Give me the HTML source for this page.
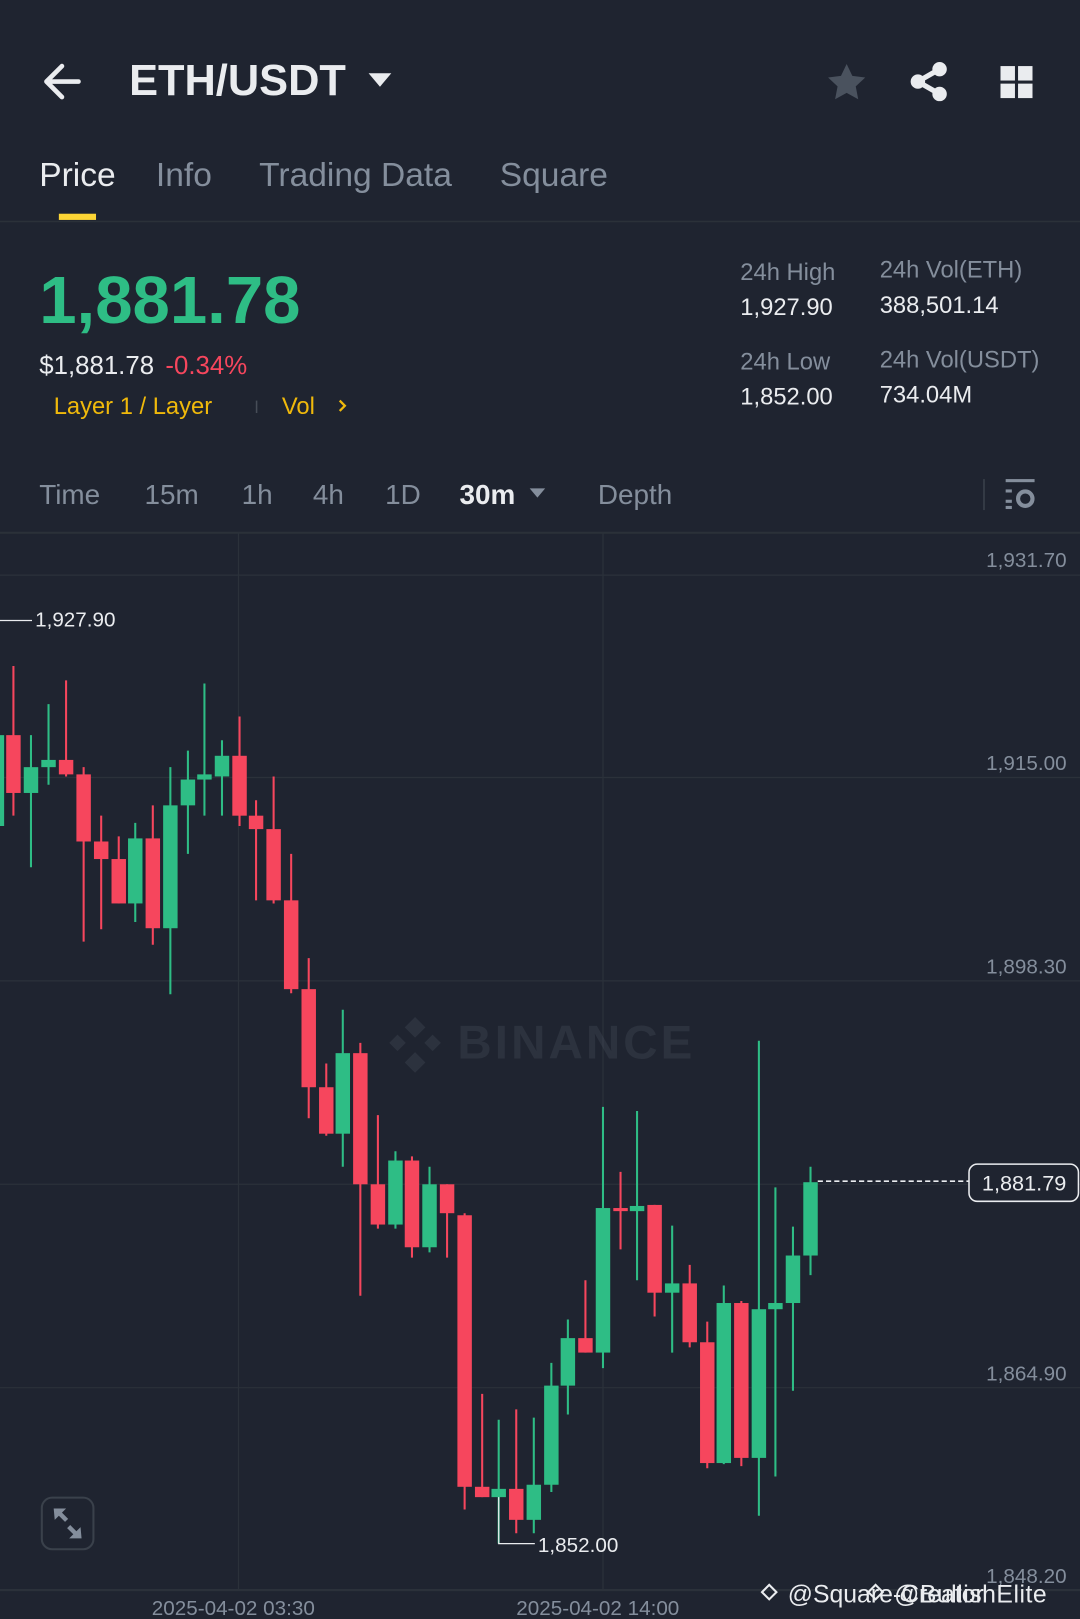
<!DOCTYPE html>
<html><head><meta charset="utf-8"><style>
html,body{margin:0;padding:0;background:#1f2430;overflow:hidden}
#w{width:1046px;height:1568px;transform:scale(1.03250478);transform-origin:0 0;position:relative;background:#1f2430;font-family:"Liberation Sans",sans-serif;color:#eaecef}
.a{position:absolute;white-space:nowrap}
.g{color:#848e9c}
</style></head><body><div id="w">
<svg class="a" style="left:0;top:0" width="1046" height="1568">
<path d="M76 79H46M60 64L45 79L60 94" stroke="#eaecef" stroke-width="4.5" fill="none" stroke-linecap="round" stroke-linejoin="round"/>
<path d="M357 71h22l-11 13z" fill="#eaecef"/>
<path d="M820 62l5.5 11.5 12.5 1.6-9.2 8.6 2.4 12.4-11.2-6.1-11.2 6.1 2.4-12.4-9.2-8.6 12.5-1.6z" fill="#4a525e"/>
<g fill="#eaecef"><circle cx="910" cy="67" r="7"/><circle cx="910" cy="91" r="7"/><circle cx="889" cy="79" r="7"/></g>
<path d="M910 67L889 79L910 91" stroke="#eaecef" stroke-width="5" fill="none"/>
<g fill="#eaecef"><rect x="969" y="64" width="14" height="14"/><rect x="986" y="64" width="14" height="14"/><rect x="969" y="81" width="14" height="14"/><rect x="986" y="81" width="14" height="14"/></g>
<rect x="57" y="207" width="36" height="6" fill="#fcd535"/>
<line x1="0" y1="214.5" x2="1046" y2="214.5" stroke="#2b3139" stroke-width="1.5"/>
<line x1="248.5" y1="388" x2="248.5" y2="400" stroke="#474d57" stroke-width="1.5"/>
<path d="M329 388l5 5-5 5" stroke="#f0b90b" stroke-width="2.2" fill="none"/>
<path d="M513 473h15l-7.5 9z" fill="#848e9c"/>
<line x1="953" y1="464" x2="953" y2="494" stroke="#3a414b" stroke-width="1.5"/>
<g fill="#848e9c"><rect x="974" y="464" width="28" height="3"/><rect x="974" y="474" width="6" height="3"/><rect x="974" y="484" width="6" height="3"/><rect x="974" y="490" width="6" height="3"/></g>
<circle cx="993" cy="483" r="7" stroke="#848e9c" stroke-width="4" fill="none"/>
<line x1="0" y1="516" x2="1046" y2="516" stroke="#2b3139" stroke-width="2"/>
<g stroke="#2b313a" stroke-width="1.2">
<line x1="0" y1="557" x2="1046" y2="557"/><line x1="0" y1="753" x2="1046" y2="753"/><line x1="0" y1="950" x2="1046" y2="950"/><line x1="0" y1="1147" x2="1046" y2="1147"/><line x1="0" y1="1344" x2="1046" y2="1344"/><line x1="0" y1="1540" x2="1046" y2="1540"/>
<line x1="231" y1="516" x2="231" y2="1540"/><line x1="584" y1="516" x2="584" y2="1540"/>
</g>
<line x1="0" y1="1540" x2="1046" y2="1540" stroke="#2b313a" stroke-width="2"/>
<g opacity="0.13" fill="#848e9c"><path d="M402 985l10 10-10 10-10-10zM385 1002l8 8-8 8-8-8zM419 1002l8 8-8 8-8-8zM402 1019l10 10-10 10-10-10z"/>
<text x="443" y="1025" font-family="Liberation Sans" font-weight="bold" font-size="46" letter-spacing="3">BINANCE</text></g>
<g id="c"></g>
<line x1="0" y1="601" x2="31" y2="601" stroke="#eaecef" stroke-width="1.2"/>
<path d="M483 1450V1495H518" stroke="#eaecef" stroke-width="1.2" fill="none"/>
<line x1="792" y1="1144" x2="938" y2="1144" stroke="#eaecef" stroke-width="1.5" stroke-dasharray="5 3"/>
<rect x="938.5" y="1127.5" width="106" height="36" rx="8" fill="#1f2430" stroke="#eaecef" stroke-width="1.5"/>
<rect x="40.5" y="1450.5" width="50" height="50" rx="10" fill="none" stroke="#3a414b" stroke-width="2"/>
<path d="M52 1461h12l-4 4 6 6-3 3-6-6-4 4z M79 1490h-12l4-4-6-6 3-3 6 6 4-4z" fill="#848e9c"/>
<path d="M745 1535l7 7-7 7-7-7z" stroke="#eaecef" stroke-width="2" fill="none"/>
<path d="M848 1535l7 7-7 7-7-7z" stroke="#eaecef" stroke-width="2" fill="none"/>
</svg>
<div class="a" style="left:125px;top:54px;font-size:42px;font-weight:bold">ETH/USDT</div>
<div class="a" style="left:38px;top:151px;font-size:32.5px">Price</div>
<div class="a g" style="left:151px;top:151px;font-size:32.5px">Info</div>
<div class="a g" style="left:251px;top:151px;font-size:32.5px">Trading Data</div>
<div class="a g" style="left:484px;top:151px;font-size:32.5px">Square</div>
<div class="a" style="left:38px;top:253px;font-size:65px;font-weight:bold;color:#2ebd85">1,881.78</div>
<div class="a" style="left:38px;top:340px;font-size:25px">$1,881.78 <span style="color:#f6465d;margin-left:4px">-0.34%</span></div>
<div class="a" style="left:52px;top:380px;font-size:23px;color:#f0b90b">Layer 1 / Layer</div>
<div class="a" style="left:273px;top:380px;font-size:23px;color:#f0b90b">Vol</div>
<div class="a g" style="left:717px;top:250px;font-size:23px">24h High</div>
<div class="a" style="left:717px;top:284px;font-size:23px">1,927.90</div>
<div class="a g" style="left:717px;top:337px;font-size:23px">24h Low</div>
<div class="a" style="left:717px;top:371px;font-size:23px">1,852.00</div>
<div class="a g" style="left:852px;top:248px;font-size:23px">24h Vol(ETH)</div>
<div class="a" style="left:852px;top:282px;font-size:23px">388,501.14</div>
<div class="a g" style="left:852px;top:335px;font-size:23px">24h Vol(USDT)</div>
<div class="a" style="left:852px;top:369px;font-size:23px">734.04M</div>
<div class="a g" style="left:38px;top:464px;font-size:27px">Time</div>
<div class="a g" style="left:140px;top:464px;font-size:27px">15m</div>
<div class="a g" style="left:234px;top:464px;font-size:27px">1h</div>
<div class="a g" style="left:303px;top:464px;font-size:27px">4h</div>
<div class="a g" style="left:373px;top:464px;font-size:27px">1D</div>
<div class="a" style="left:445px;top:464px;font-size:27px;font-weight:bold">30m</div>
<div class="a g" style="left:579px;top:464px;font-size:27px">Depth</div>
<div class="a g" style="right:13px;top:532px;font-size:20px">1,931.70</div>
<div class="a g" style="right:13px;top:729px;font-size:20px">1,915.00</div>
<div class="a g" style="right:13px;top:926px;font-size:20px">1,898.30</div>
<div class="a g" style="right:13px;top:1320px;font-size:20px">1,864.90</div>
<div class="a g" style="right:13px;top:1516px;font-size:20px">1,848.20</div>
<div class="a g" style="left:147px;top:1547px;font-size:20px">2025-04-02 03:30</div>
<div class="a g" style="left:500px;top:1547px;font-size:20px">2025-04-02 14:00</div>
<div class="a" style="left:34px;top:590px;font-size:20px">1,927.90</div>
<div class="a" style="left:521px;top:1486px;font-size:20px">1,852.00</div>
<div class="a" style="left:951px;top:1135px;font-size:21px">1,881.79</div>
<div class="a" style="left:763px;top:1531px;font-size:24px">@Square-Creator</div>
<div class="a" style="left:866px;top:1531px;font-size:24px;letter-spacing:0.5px">@BullishElite</div>
</div>
<script>
var d=[[-3,712,800,712,800,1],[13,645,790,712,768,0],[30,712,840,743,768,1],[47,682,760,736,743,1],[64,659,752,736,750,0],[81,743,912,750,815,0],[98,790,900,815,832,0],[115,810,875,832,875,0],[131,797,893,812,875,1],[148,780,915,812,899,0],[165,743,963,780,899,1],[182,727,827,755,780,1],[198,662,790,750,755,1],[215,717,790,732,752,1],[232,694,800,732,790,0],[248,775,872,790,803,0],[265,752,875,803,872,0],[282,827,962,872,958,0],[299,928,1083,958,1053,0],[316,1030,1100,1053,1098,0],[332,978,1130,1020,1098,1],[349,1010,1255,1020,1147,0],[366,1080,1190,1147,1186,0],[383,1115,1190,1124,1186,1],[399,1120,1218,1124,1208,0],[416,1130,1213,1147,1208,1],[433,1147,1218,1147,1175,0],[450,1175,1462,1177,1440,0],[467,1350,1450,1440,1450,0],[483,1375,1495,1442,1450,1],[500,1365,1485,1442,1472,0],[517,1373,1485,1438,1472,1],[534,1320,1445,1342,1438,1],[550,1278,1370,1296,1342,1],[567,1240,1310,1296,1310,0],[584,1072,1325,1170,1310,1],[601,1135,1210,1170,1173,0],[617,1076,1240,1168,1173,1],[634,1167,1275,1167,1252,0],[651,1187,1310,1243,1252,1],[668,1225,1305,1243,1300,0],[685,1280,1422,1300,1417,0],[701,1245,1418,1262,1417,1],[718,1260,1420,1262,1412,0],[735,1008,1468,1268,1412,1],[751,1150,1430,1262,1268,1],[768,1188,1347,1216,1262,1],[785,1130,1235,1145,1216,1]];
var s='';d.forEach(function(c){var col=c[5]?'#2ebd85':'#f6465d';s+='<line x1="'+c[0]+'" x2="'+c[0]+'" y1="'+c[1]+'" y2="'+c[2]+'" stroke="'+col+'" stroke-width="2"/><rect x="'+(c[0]-7)+'" y="'+c[3]+'" width="14" height="'+Math.max(3,c[4]-c[3])+'" fill="'+col+'"/>';});
document.getElementById('c').innerHTML=s;
</script>
</body></html>
